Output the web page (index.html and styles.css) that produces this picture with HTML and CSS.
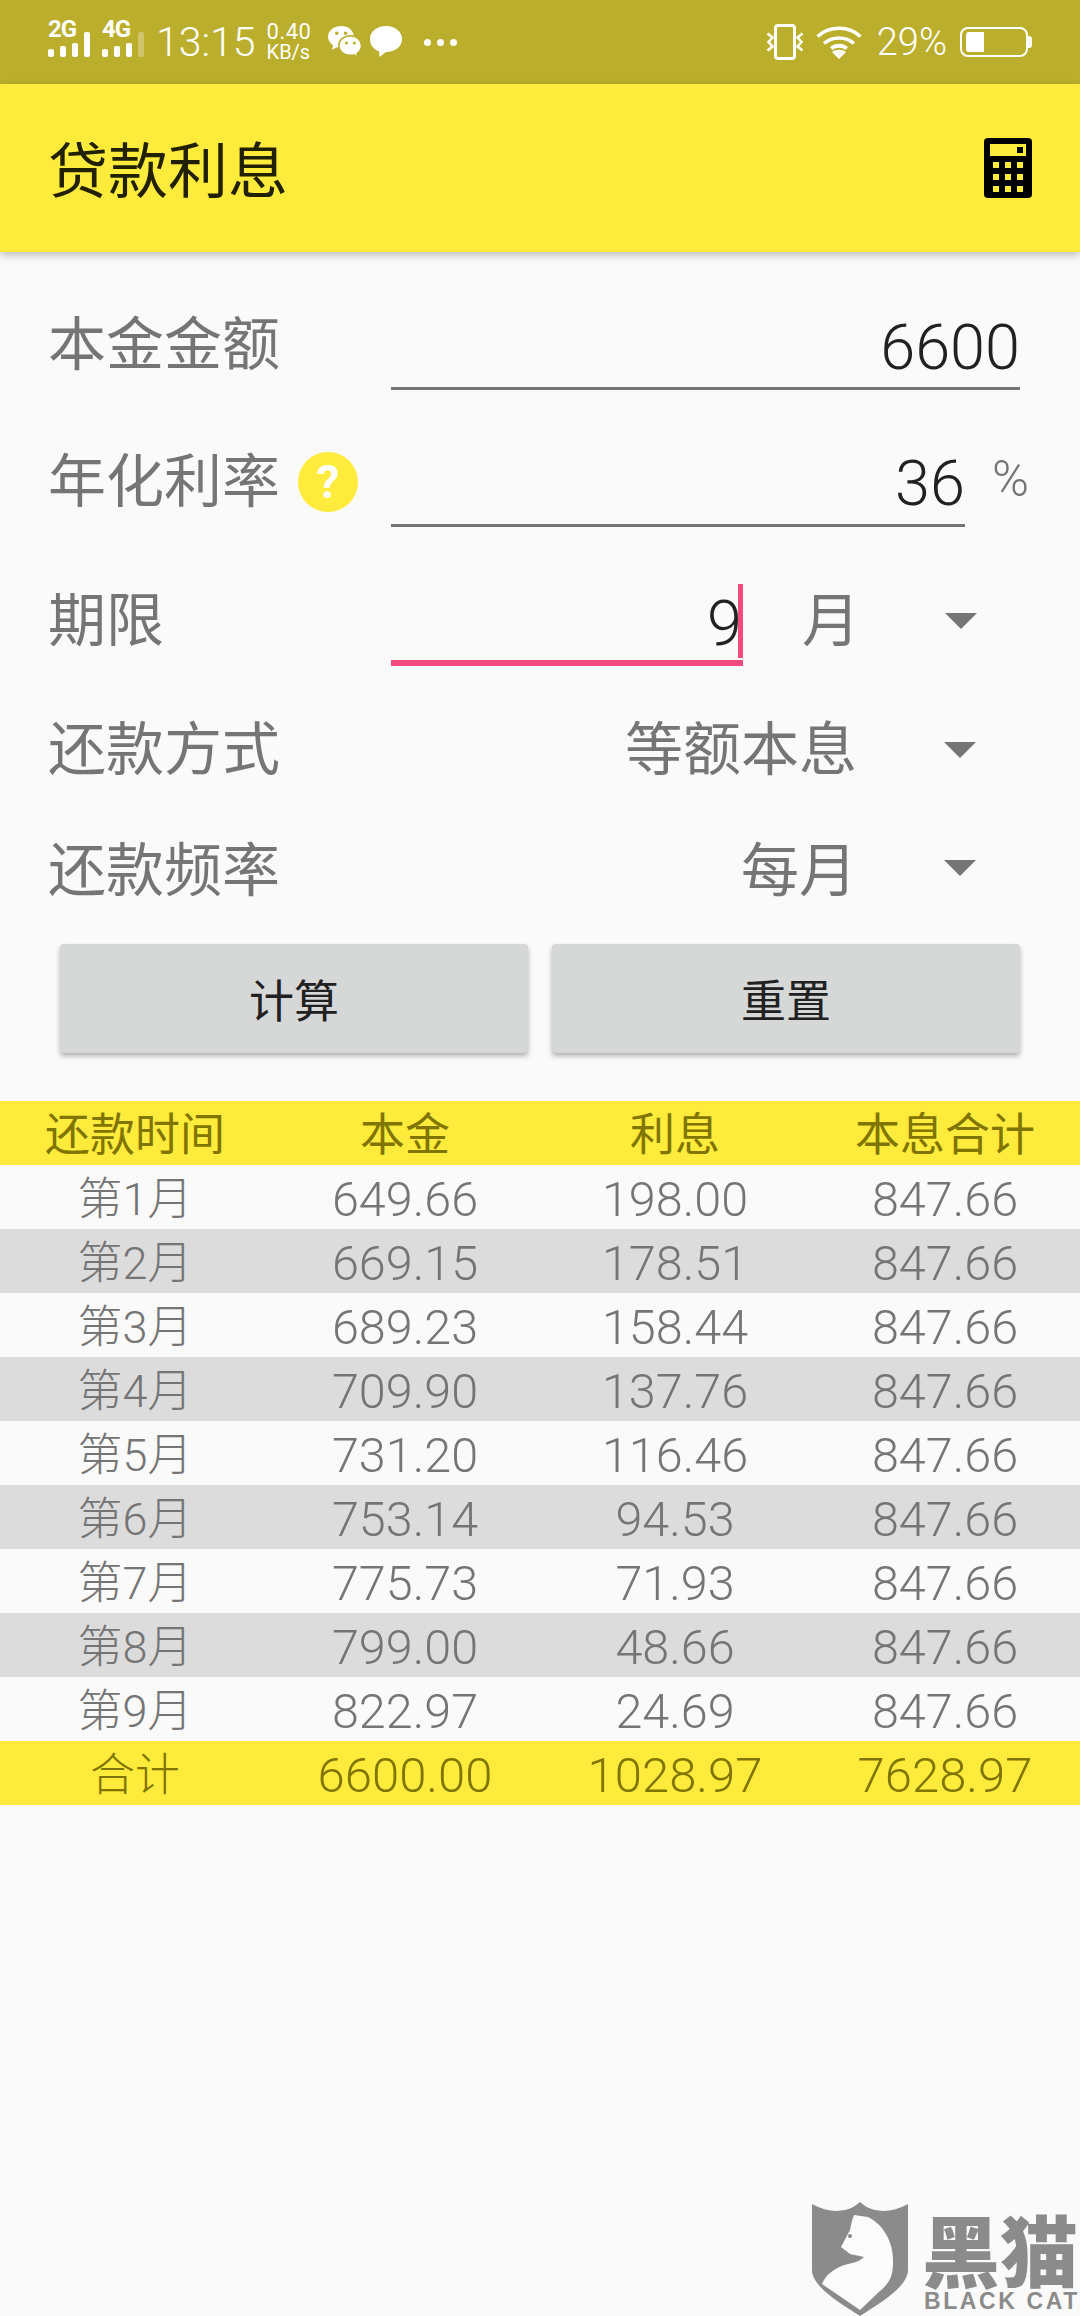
FILE: index.html
```html
<!DOCTYPE html>
<html lang="zh-CN">
<head>
    <meta charset="UTF-8">
    <meta name="viewport" content="width=device-width, initial-scale=1.0">
    <title>贷款利息</title>
    <link rel="stylesheet" href="styles.css">
</head>
<body>
    <div id="screen">
        <!-- Barra de estado -->
        <div id="status-bar">
            <div class="signal">
                <span class="net">2G</span>
                <div class="bars"><i class="b1"></i><i class="b2"></i><i class="b3"></i><i class="b4"></i></div>
            </div>
            <div class="signal second">
                <span class="net">4G</span>
                <div class="bars"><i class="b1"></i><i class="b2"></i><i class="b3"></i><i class="b4 off"></i></div>
            </div>
            <span class="time">13:15</span>
            <div class="speed"><span>0.40</span><span class="unit">KB/s</span></div>
            <svg class="ic-wechat" viewBox="0 0 33 33">
                <path fill="#fff" d="M13 1C6 1 0 5.500 0 11.500c0 3.500 2 6.300 5 8.300L3.800 24l4.700-2.500c1.300.4 2.800.6 4.500.6 7 0 12-4.800 12-10.600C25 5.500 20 1 13 1z"/>
                <circle cx="8.500" cy="8" r="1.700" fill="#bbae2c"/>
                <circle cx="17" cy="8" r="1.700" fill="#bbae2c"/>
                <path fill="#fff" stroke="#bbae2c" stroke-width="1.500" d="M21.500 10.500c-6.300 0-11 4.200-11 9.500s4.700 9.500 11 9.500c1.300 0 2.500-.2 3.600-.5l4 2.500-1-3.700c2.800-1.800 4.400-4.600 4.400-7.800 0-5.300-4.700-9.500-11-9.500z"/>
                <circle cx="18" cy="17.500" r="1.500" fill="#bbae2c"/>
                <circle cx="25.500" cy="17.500" r="1.500" fill="#bbae2c"/>
            </svg>
            <svg class="ic-bubble" viewBox="0 0 32 32">
                <path fill="#fff" d="M16 0C7 0 0 5.500 0 13c0 6.500 4.500 11 9 12.300l.5 5.700 6.500-5c9.500 0 16-5.500 16-13S25 0 16 0z"/>
            </svg>
            <div class="dots"><i></i><i></i><i></i></div>

            <div class="status-right">
                <svg class="ic-vibrate" viewBox="0 0 38 36">
                    <rect x="9.500" y="1.500" width="19" height="33" rx="2.500" fill="none" stroke="#fff" stroke-width="3"/>
                    <path fill="none" stroke="#fff" stroke-width="2.600" d="M1.500 9.500l5 4-4 4.500 4 4.500-5 4M36.500 9.500l-5 4 4 4.500-4 4.500 5 4"/>
                </svg>
                <svg class="ic-wifi" viewBox="0 0 46 33">
                    <path fill="none" stroke="#fff" stroke-width="3.500" d="M1.500 10.500C13 -0.500 33 -0.500 44.500 10.500M8 17.500C16 10 30 10 38 17.500"/>
                    <path fill="#fff" d="M14 21c5-4.500 13-4.500 18 0l-2.500 3c-3.500-3-9.500-3-13 0zM23 33l-7-7c4-3 10-3 14 0z"/>
                </svg>
                <span class="pct">29%</span>
                <div class="battery"><div class="level"></div></div>
                <div class="battery-tip"></div>
            </div>
        </div>

        <!-- Barra de titulo -->
        <div id="toolbar">
            <span class="title">贷款利息</span>
            <svg class="ic-calc" viewBox="0 0 48 60">
                <rect width="48" height="60" rx="4" fill="#000"/>
                <rect x="6" y="6" width="36" height="12" fill="#ffeb3b"/>
                <rect x="33" y="9" width="6" height="6" fill="#000"/>
                <g fill="#ffeb3b">
                    <rect x="9" y="24" width="6" height="6"/><rect x="21" y="24" width="6" height="6"/><rect x="33" y="24" width="6" height="6"/>
                    <rect x="9" y="36" width="6" height="6"/><rect x="21" y="36" width="6" height="6"/><rect x="33" y="36" width="6" height="6"/>
                    <rect x="9" y="48" width="6" height="6"/><rect x="21" y="48" width="6" height="6"/><rect x="33" y="48" width="6" height="6"/>
                </g>
            </svg>
        </div>

        <!-- Formulario -->
        <div id="form">
            <div class="row row-1">
                <div class="label">本金金额</div>
                <div class="field full">6600</div>
            </div>
            <div class="row row-2">
                <div class="label">年化利率<span class="help">?</span></div>
                <div class="field rate">36</div>
                <span class="percent">%</span>
            </div>
            <div class="row row-3">
                <div class="label">期限</div>
                <div class="field focus">9<i class="cursor"></i></div>
                <span class="choice month">月</span>
                <i class="arrow"></i>
            </div>
            <div class="row row-4">
                <div class="label">还款方式</div>
                <span class="choice wide">等额本息</span>
                <i class="arrow"></i>
            </div>
            <div class="row row-5">
                <div class="label">还款频率</div>
                <span class="choice wide">每月</span>
                <i class="arrow up"></i>
            </div>
            <div class="buttons">
                <button>计算</button>
                <button>重置</button>
            </div>
        </div>

        <!-- Tabla -->
        <div id="table">
            <div class="tr head"><span>还款时间</span><span>本金</span><span>利息</span><span>本息合计</span></div>
            <div class="tr"><span>第1月</span><span>649.66</span><span>198.00</span><span>847.66</span></div>
            <div class="tr"><span>第2月</span><span>669.15</span><span>178.51</span><span>847.66</span></div>
            <div class="tr"><span>第3月</span><span>689.23</span><span>158.44</span><span>847.66</span></div>
            <div class="tr"><span>第4月</span><span>709.90</span><span>137.76</span><span>847.66</span></div>
            <div class="tr"><span>第5月</span><span>731.20</span><span>116.46</span><span>847.66</span></div>
            <div class="tr"><span>第6月</span><span>753.14</span><span>94.53</span><span>847.66</span></div>
            <div class="tr"><span>第7月</span><span>775.73</span><span>71.93</span><span>847.66</span></div>
            <div class="tr"><span>第8月</span><span>799.00</span><span>48.66</span><span>847.66</span></div>
            <div class="tr"><span>第9月</span><span>822.97</span><span>24.69</span><span>847.66</span></div>
            <div class="tr foot"><span>合计</span><span>6600.00</span><span>1028.97</span><span>7628.97</span></div>
        </div>

        <!-- Marca de agua -->
        <div id="watermark">
            <svg class="shield" viewBox="0 0 96 114">
                <path fill="#8b8b8b" d="M0 2C18 12 36 11 48 0c12 11 30 12 48 2v66c0 16-26 32-48 46C26 100 0 84 0 68z"/>
                <path fill="#fbfbfb" d="M42 13l14 2c16 8 26 26 25 46 0 12-3 20-13 28L48 108 10 82c4-10 14-17 26-20 6-1 12-3 16-7l-14-3-9-7c3-6 6-11 9-17 1-5 2-10 4-15z"/>
                <circle cx="38" cy="34" r="2" fill="#8b8b8b"/>
            </svg>
            <div class="brand">
                <div class="cn">黑猫</div>
                <div class="en">BLACK CAT</div>
            </div>
        </div>
    </div>
</body>
</html>
```

FILE: styles.css
```css
/* Estilo general */
body {
    margin: 0;
    font-family: Roboto, "Noto Sans CJK SC", sans-serif;
    background-color: #fafafa;
    color: #757575;
}
#screen {
    position: relative;
    width: 1080px;
    height: 2316px;
    overflow: hidden;
}

/* Barra de estado */
#status-bar {
    height: 84px;
    background-color: #bbae2c;
    color: #fff;
    display: flex;
    align-items: center;
    padding-left: 48px;
    box-sizing: border-box;
}
.signal {
    width: 42px;
    height: 36px;
    display: flex;
    flex-direction: column;
    margin-bottom: 6px;
    position: relative;
}
.signal.second {
    margin-left: 12px;
}
.net {
    font-size: 24px;
    line-height: 16px;
    font-weight: 700;
    letter-spacing: -1px;
}
.bars {
    position: absolute;
    left: 0;
    bottom: 0;
    width: 42px;
    height: 25px;
    display: flex;
    align-items: flex-end;
    gap: 6px;
}
.bars i {
    width: 6px;
    background-color: #fff;
    border-radius: 2px;
}
.bars .b1 { height: 8px; }
.bars .b2 { height: 11px; }
.bars .b3 { height: 14px; }
.bars .b4 { height: 25px; }
.bars .off { opacity: 0.3; }
.time {
    font-size: 41px;
    font-weight: 300;
    margin-left: 12px;
}
.speed {
    display: flex;
    flex-direction: column;
    font-size: 22px;
    line-height: 21px;
    letter-spacing: 0.5px;
    margin-left: 11px;
}
.speed .unit {
    font-size: 20px;
    letter-spacing: 0;
}
.ic-wechat {
    width: 34px;
    height: 34px;
    margin-left: 17px;
}
.ic-bubble {
    width: 32px;
    height: 32px;
    margin-left: 8px;
}
.dots {
    display: flex;
    gap: 6px;
    margin-left: 22px;
}
.dots i {
    width: 7px;
    height: 7px;
    background-color: #fff;
    border-radius: 50%;
}
.status-right {
    margin-left: auto;
    display: flex;
    align-items: center;
    padding-right: 48px;
}
.ic-vibrate {
    width: 38px;
    height: 36px;
}
.ic-wifi {
    width: 46px;
    height: 33px;
    margin-left: 12px;
}
.pct {
    font-size: 38px;
    font-weight: 300;
    margin-left: 15px;
}
.battery {
    width: 68px;
    height: 30px;
    margin-left: 13px;
    border: 2px solid #fff;
    border-radius: 8px;
    box-sizing: border-box;
    padding: 3px 4px;
}
.level {
    width: 18px;
    height: 100%;
    background-color: #fff;
    border-radius: 3px 0 0 3px;
}
.battery-tip {
    width: 4px;
    height: 12px;
    background-color: #fff;
    border-radius: 0 3px 3px 0;
}

/* Barra de titulo */
#toolbar {
    height: 168px;
    background-color: #ffeb3b;
    color: #212100;
    display: flex;
    align-items: center;
    justify-content: space-between;
    padding: 0 48px;
    box-shadow: 0 3px 8px rgba(0, 0, 0, 0.25);
    position: relative;
}
.title {
    font-size: 60px;
    line-height: 178px;
    height: 168px;
}
.ic-calc {
    width: 48px;
    height: 60px;
}

/* Formulario */
#form {
    padding: 0 60px 0 48px;
}
.row {
    display: flex;
    align-items: flex-end;
    font-size: 58px;
}
.row-1 { height: 138px; }
.row-2 { height: 137px; }
.row-3 { height: 139px; }
.row-4 { height: 129px; }
.row-5 { height: 121px; }
.label {
    width: 343px;
    height: 84px;
    line-height: 84px;
    margin-bottom: 3px;
    display: flex;
    align-items: center;
    flex-shrink: 0;
}
.help {
    width: 60px;
    height: 60px;
    line-height: 60px;
    margin-left: 18px;
    border-radius: 50%;
    background-color: #ffeb3b;
    color: #fff;
    text-align: center;
    font-size: 46px;
    font-weight: 700;
    font-family: Roboto, sans-serif;
}
.field {
    height: 84px;
    line-height: 84px;
    border-bottom: 3px solid #757575;
    color: #212121;
    font-size: 63px;
    font-weight: 300;
    text-align: right;
    position: relative;
    flex-shrink: 0;
}
.field.full {
    width: 629px;
    box-sizing: border-box;
}
.field.rate {
    width: 574px;
    line-height: 88px;
}
.percent {
    font-size: 50px;
    font-weight: 300;
    line-height: 90px;
    margin: 0 0 3px 27px;
}
.field.focus {
    width: 352px;
    padding-right: 1px;
    box-sizing: border-box;
    border-bottom: 6px solid #f44a80;
}
.cursor {
    position: absolute;
    right: 0;
    top: 2px;
    width: 5px;
    height: 74px;
    background-color: #f44a80;
}
.choice {
    line-height: 84px;
    margin-bottom: 3px;
}
.choice.month {
    margin-left: 59px;
    margin-right: 85px;
}
.choice.wide {
    width: 466px;
    text-align: right;
    margin-right: 87px;
    flex-shrink: 0;
}
.arrow {
    width: 0;
    height: 0;
    border-left: 16px solid transparent;
    border-right: 16px solid transparent;
    border-top: 16px solid #757575;
    margin-bottom: 37px;
}
.arrow.up {
    margin-bottom: 40px;
}
.buttons {
    display: flex;
    gap: 24px;
    padding: 0 0 0 12px;
    margin-top: 28px;
}
.buttons button {
    width: 468px;
    height: 109px;
    background-color: #d6d7d7;
    color: #212121;
    border: none;
    border-radius: 4px;
    font-family: inherit;
    font-size: 45px;
    box-shadow: 0 3px 5px rgba(0, 0, 0, 0.3);
}

/* Tabla */
#table {
    margin-top: 48px;
}
.tr {
    height: 64px;
    display: grid;
    grid-template-columns: repeat(4, 270px);
    font-size: 48.500px;
    font-weight: 300;
    line-height: 70px;
    text-align: center;
}
.tr span:first-child {
    font-size: 45px;
}
.tr:nth-child(odd) {
    background-color: #dcdcdc;
}
.tr.head, .tr.foot {
    background-color: #ffeb3b;
    color: #7f7500;
}
.tr.foot {
    font-size: 49px;
}
.tr.head {
    font-size: 45px;
    font-weight: 400;
}

/* Marca de agua */
#watermark {
    position: absolute;
    left: 812px;
    top: 2202px;
    display: flex;
    color: #8b8b8b;
}
.shield {
    width: 96px;
    height: 114px;
}
.brand {
    margin-left: 14px;
    width: 156px;
}
.cn {
    font-family: "Noto Sans CJK SC", sans-serif;
    font-size: 78px;
    font-weight: 900;
    line-height: 84px;
    margin-top: 4px;
}
.en {
    font-family: "Liberation Sans", sans-serif;
    font-size: 23px;
    font-weight: 700;
    line-height: 22px;
    letter-spacing: 2.600px;
    padding-left: 2px;
    white-space: nowrap;
}
```
